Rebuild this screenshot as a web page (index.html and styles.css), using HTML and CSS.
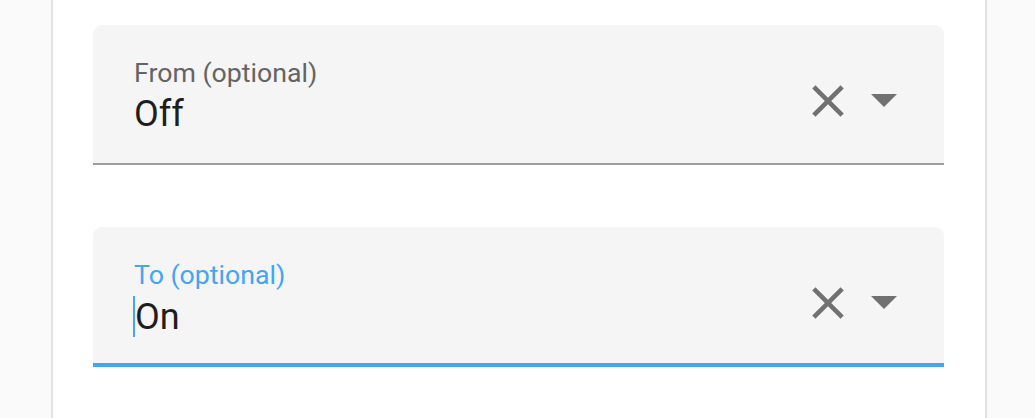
FILE: index.html
```html
<!DOCTYPE html>
<html lang="en">
<head>
<meta charset="utf-8">
<title>State trigger</title>
<link rel="stylesheet" href="styles.css">
</head>
<body>
<div class="page">
  <div class="side side-left"></div>
  <main class="card">
    <div class="field">
      <div class="field-text">
        <div class="label">From (optional)</div>
        <div class="value">Off</div>
      </div>
      <div class="icons">
        <span class="icon-btn">
          <svg viewBox="0 0 24 24" width="54" height="54"><path fill="currentColor" d="M19,6.41L17.59,5L12,10.59L6.41,5L5,6.41L10.59,12L5,17.59L6.41,19L12,13.41L17.59,19L19,17.59L13.41,12L19,6.41Z"/></svg>
        </span>
        <svg class="caret-down" viewBox="7 10 10 5" width="26" height="13"><polygon fill="currentColor" points="7,10 12,15 17,10"/></svg>
      </div>
    </div>
    <div class="field focused">
      <div class="field-text">
        <div class="label">To (optional)</div>
        <div class="value"><span class="cursor"></span>On</div>
      </div>
      <div class="icons">
        <span class="icon-btn">
          <svg viewBox="0 0 24 24" width="54" height="54"><path fill="currentColor" d="M19,6.41L17.59,5L12,10.59L6.41,5L5,6.41L10.59,12L5,17.59L6.41,19L12,13.41L17.59,19L19,17.59L13.41,12L19,6.41Z"/></svg>
        </span>
        <svg class="caret-down" viewBox="7 10 10 5" width="26" height="13"><polygon fill="currentColor" points="7,10 12,15 17,10"/></svg>
      </div>
    </div>
  </main>
  <div class="side side-right"></div>
</div>
</body>
</html>
```
FILE: styles.css
```css
html, body {
  margin: 0;
  padding: 0;
  height: 100%;
  background: #fafafa;
  font-family: Roboto, "Noto Sans", Arial, sans-serif;
}

.page {
  display: flex;
  height: 418px;
  overflow: hidden;
}

.side {
  background: #fafafa;
}

.side-left {
  width: 51px;
  border-right: 2px solid #e2e2e2;
}

.side-right {
  flex: 1;
  border-left: 2px solid #e2e2e2;
}

.card {
  width: 932px;
  background: #ffffff;
  box-sizing: border-box;
  padding: 25px 41px 0 40px;
  display: flex;
  flex-direction: column;
  gap: 62px;
}

.field {
  height: 140px;
  box-sizing: border-box;
  background: #f5f5f5;
  border-radius: 9px 9px 0 0;
  border-bottom: 2px solid #9e9e9e;
  display: flex;
  padding: 32px 47px 0 41px;
}

.field.focused {
  border-bottom: 4px solid #42a5f5;
}

.field-text {
  flex: 1;
  display: flex;
  flex-direction: column;
}

.label {
  font-size: 26.7px;
  line-height: 32px;
  color: #646464;
}

.focused .label {
  color: #42a5f5;
}

.value {
  margin-top: 5px;
  font-size: 36px;
  line-height: 40px;
  color: #1e1e1e;
  display: flex;
  align-items: center;
}

.cursor {
  display: inline-block;
  width: 2px;
  height: 41px;
  background: #42a5f5;
  margin-left: -1px;
  margin-right: 0;
}

.icons {
  display: flex;
  align-items: center;
  gap: 16px;
  align-self: flex-start;
  margin-top: 17px;
  color: #717171;
}

.icon-btn {
  display: flex;
  width: 54px;
  height: 54px;
}

.caret-down {
  display: block;
  margin-top: -2px;
}
```
